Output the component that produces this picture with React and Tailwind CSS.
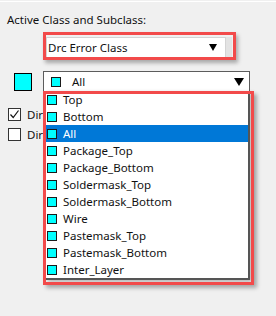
import React from 'react'

const layers = [
  'Top',
  'Bottom',
  'All',
  'Package_Top',
  'Package_Bottom',
  'Soldermask_Top',
  'Soldermask_Bottom',
  'Wire',
  'Pastemask_Top',
  'Pastemask_Bottom',
  'Inter_Layer',
]

// ─── small bits ───────────────────────────────────────────────────────────────
function Arrow({ big }) {
  return big ? (
    <div className="w-0 h-0 border-l-[5px] border-r-[5px] border-t-[8px] border-l-transparent border-r-transparent border-t-black" />
  ) : (
    <div className="w-0 h-0 border-l-[4px] border-r-[4px] border-t-[7px] border-l-transparent border-r-transparent border-t-black" />
  )
}

function Swatch() {
  return <div className="w-[10px] h-[10px] bg-[#00ffff] border border-[#1a1a1a] shrink-0" />
}

function Check({ checked }) {
  return (
    <div className="w-[13px] h-[13px] border border-[#333] bg-white flex items-center justify-center shrink-0">
      {checked && (
        <svg width="11" height="11" viewBox="0 0 11 11">
          <path d="M1.5 5.5 L4.2 8.5 L9.5 1.5" fill="none" stroke="#111" strokeWidth="1.2" />
        </svg>
      )}
    </div>
  )
}

export default function App() {
  return (
    <div
      className="relative w-[276px] h-[316px] overflow-hidden bg-[#f0f0f0] text-[11.5px] text-[#111] leading-none"
      style={{ fontFamily: '"Segoe UI", "Noto Sans", sans-serif' }}
    >
      <div className="h-[2px] border-b border-white" />

      <div className="pl-[7px] pt-[12px] h-[32px]">Active Class and Subclass:</div>

      {/* class combo */}
      <div className="flex pl-[46px] pt-[3px]">
        <div className="w-[180px] h-[21px] bg-white border border-[#d4d4d4] flex items-center justify-between pl-[1px] pr-[8px]">
          <span>Drc Error Class</span>
          <Arrow />
        </div>
        <div className="w-[6px] h-[21px] bg-[#e3e3e3]" />
      </div>

      {/* subclass row */}
      <div className="flex items-center mt-[13px] h-[21px]">
        <div className="ml-[14px] w-[18px] h-[18px] bg-[#00ffff] border border-black" />
        <div className="ml-[11px] w-[207px] h-[21px] bg-white border border-[#5c5c5c] flex items-center pl-[7px] pr-[5px]">
          <Swatch />
          <span className="ml-[11px] flex-1">All</span>
          <Arrow big />
        </div>
      </div>

      {/* checkboxes, mostly hidden under the popup */}
      <div className="flex items-center gap-[6px] pl-[8px] mt-[16px]">
        <Check checked />
        <span>Dir</span>
      </div>
      <div className="flex items-center gap-[6px] pl-[8px] mt-[7px]">
        <Check />
        <span>Dir</span>
      </div>

      {/* annotation box around the class combo */}
      <div className="absolute left-[43px] top-[32px] w-[193px] h-[28px] border-[3px] border-[#f24a4a] shadow-[2px_3px_4px_rgba(0,0,0,0.3)]" />

      {/* open dropdown list */}
      <div className="absolute left-[46px] top-[91px] w-[204px] bg-white border-r-2 border-b-2 border-[#555] shadow-[2px_2px_4px_rgba(0,0,0,0.25)]">
        {layers.map((name) => {
          const sel = name === 'All'
          return (
            <div
              key={name}
              className={
                'h-[17px] flex items-center pl-[1px] ' +
                (sel ? 'bg-[#0078d7] text-white' : '')
              }
            >
              <Swatch />
              <span className="ml-[6px]">{name}</span>
            </div>
          )
        })}
      </div>

      {/* annotation box around the list */}
      <div className="absolute left-[43px] top-[91px] w-[211px] h-[194px] border-[3px] border-[#f24a4a] shadow-[3px_3px_4px_rgba(0,0,0,0.3)]" />
    </div>
  )
}
